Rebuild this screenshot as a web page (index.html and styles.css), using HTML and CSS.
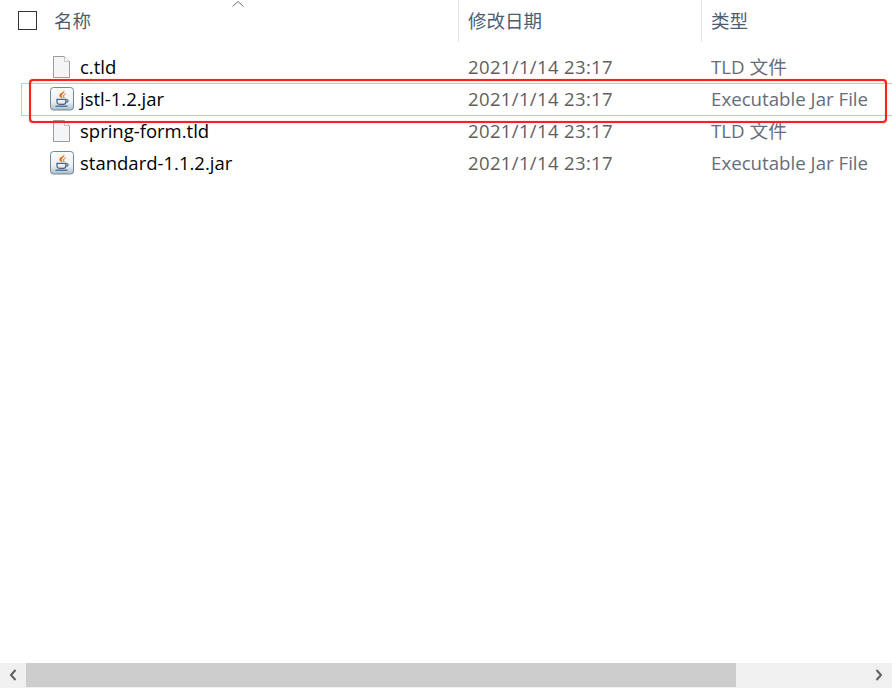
FILE: index.html
```html
<!DOCTYPE html>
<html lang="zh">
<head>
<meta charset="utf-8">
<title>文件列表</title>
<link rel="stylesheet" href="styles.css">
</head>
<body>
<svg class="defs" width="0" height="0" aria-hidden="true">
  <defs>
    <linearGradient id="jarbg" x1="0" y1="0" x2="0" y2="1">
      <stop offset="0" stop-color="#fbfcfc"/>
      <stop offset="0.65" stop-color="#eceef0"/>
      <stop offset="1" stop-color="#a9bccb"/>
    </linearGradient>
    <symbol id="doc" viewBox="0 0 18 24">
      <path d="M.5 1.5H11.5L16.5 6.5V22.5H.5Z" fill="#f4f5f6" stroke="#9c9c9c"/>
      <path d="M11.5 1.5V6.5H16.5" fill="#fff" stroke="#c4c4c4"/>
    </symbol>
    <symbol id="jar" viewBox="0 0 24 24">
      <rect x="0.5" y="0.5" width="23" height="22.5" rx="3" fill="url(#jarbg)" stroke="#71879a"/>
      <path d="M14 3C15.5 6 11 7 11.8 9.5C12 10.5 12.6 11.4 12.6 11.4C10 10.6 8.6 9 9.6 7.4C10.6 5.8 14 5.4 14 3Z" fill="#e0701f"/>
      <path d="M15.6 6.6C13.6 7.8 13 9 14.2 11C13 9.4 13.4 7.8 15.6 6.6Z" fill="#e0701f" stroke="#e0701f" stroke-width=".7"/>
      <path d="M7 12.4H15.8V15.2C15.8 16.8 14 17.4 11.4 17.4C8.8 17.4 7 16.8 7 15.2Z" fill="none" stroke="#47688a" stroke-width="1.3"/>
      <path d="M15.8 12.8H18V15H15.6" fill="none" stroke="#47688a"/>
      <path d="M5.5 19.2H17.5" stroke="#47688a" stroke-width="1.3"/>
    </symbol>
  </defs>
</svg>

<main class="explorer">
  <header class="head">
    <span class="check"></span>
    <div class="col col-name">名称</div>
    <div class="col col-date">修改日期</div>
    <div class="col col-type">类型</div>
    <svg class="sort" viewBox="0 0 12 6" width="12" height="6" aria-hidden="true"><path d="M.5 5.5L6 .5L11.5 5.5" fill="none" stroke="#6e6e6e"/></svg>
  </header>

  <section class="rows">
    <div class="row">
      <svg class="icon"><use href="#doc" x="3" y="0" width="18" height="24"/></svg>
      <span class="name">c.tld</span>
      <span class="date">2021/1/14 23:17</span>
      <span class="type">TLD 文件</span>
    </div>
    <div class="row selected">
      <svg class="icon"><use href="#jar" width="24" height="24"/></svg>
      <span class="name">jstl-1.2.jar</span>
      <span class="date">2021/1/14 23:17</span>
      <span class="type">Executable Jar File</span>
    </div>
    <div class="row">
      <svg class="icon"><use href="#doc" x="3" y="0" width="18" height="24"/></svg>
      <span class="name">spring-form.tld</span>
      <span class="date">2021/1/14 23:17</span>
      <span class="type">TLD 文件</span>
    </div>
    <div class="row">
      <svg class="icon"><use href="#jar" width="24" height="24"/></svg>
      <span class="name">standard-1.1.2.jar</span>
      <span class="date">2021/1/14 23:17</span>
      <span class="type">Executable Jar File</span>
    </div>
  </section>

  <div class="annotation"></div>

  <footer class="scrollbar">
    <span class="arrow"><svg viewBox="0 0 8 12" width="8" height="12" aria-hidden="true"><path d="M6.5 1L2 6L6.5 11" fill="none" stroke="#606060" stroke-width="2"/></svg></span>
    <div class="track"><div class="thumb"></div></div>
    <span class="arrow"><svg viewBox="0 0 8 12" width="8" height="12" aria-hidden="true"><path d="M1.5 1L6 6L1.5 11" fill="none" stroke="#606060" stroke-width="2"/></svg></span>
  </footer>
</main>
</body>
</html>
```

FILE: styles.css
```css
* { box-sizing: border-box; }
html, body { margin: 0; padding: 0; background: #fff; }
.defs { position: absolute; }
.explorer {
  position: relative;
  width: 892px;
  height: 688px;
  display: flex;
  flex-direction: column;
  overflow: hidden;
  font-family: "Open Sans", "Noto Sans CJK SC", sans-serif;
  font-size: 18.5px;
}
.head {
  position: relative;
  height: 51px;
  flex: none;
  display: flex;
  padding-left: 18px;
  color: #4c5d72;
}
.check {
  width: 19px;
  height: 19px;
  margin-top: 11px;
  border: 1px solid #333;
  flex: none;
}
.col {
  height: 42px;
  line-height: 41px;
  font-family: "Noto Sans CJK SC", sans-serif;
  font-size: 18.5px;
  flex: none;
}
.col-name { width: 421px; padding-left: 17px; font-weight: 400; }
.col-date { width: 243px; padding-left: 9px; border-left: 1px solid #e5e5e5; }
.col-type { flex: 1; padding-left: 9px; border-left: 1px solid #e5e5e5; }
.sort { position: absolute; left: 232px; top: 1px; }
.rows { display: flex; flex-direction: column; flex: 1; }
.row {
  height: 33px;
  margin-bottom: -1px;
  margin-left: 21px;
  display: flex;
  align-items: center;
  border: 1px solid transparent;
  border-right: 0;
  padding-left: 28px;
  white-space: nowrap;
  line-height: 24px;
}
.row.selected { border-color: #a2d3f9; }
.icon { width: 24px; height: 24px; margin-bottom: 1px; flex: none; }
.name { width: 388px; margin: 0 0 2px 6px; color: #000; flex: none; }
.date { width: 243px; margin-bottom: 2px; color: #606060; letter-spacing: .36px; flex: none; }
.type { margin-bottom: 2px; color: #656d7a; font-size: 18.7px; flex: none; }
.annotation {
  position: absolute;
  left: 29px;
  top: 79px;
  width: 858px;
  height: 44px;
  border: 2px solid #ff2020;
  border-radius: 4px;
  box-shadow: 0 0 1px #ff5a5a, inset 0 0 1px #ff5a5a;
}
.scrollbar {
  height: 25px;
  flex: none;
  display: flex;
  background: #f0f0f0;
}
.arrow {
  width: 26px;
  height: 24px;
  display: flex;
  align-items: center;
  justify-content: center;
  flex: none;
}
.track { flex: 1; height: 24px; }
.thumb { width: 710px; height: 24px; background: #cdcdcd; }
```
